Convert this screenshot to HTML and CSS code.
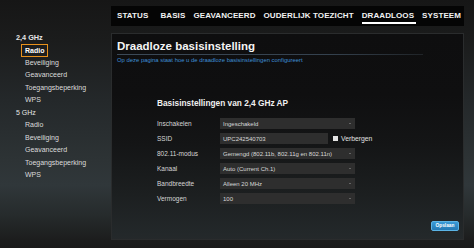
FILE: index.html
```html
<!DOCTYPE html>
<html lang="nl">
<head>
<meta charset="utf-8">
<title>Draadloze basisinstelling</title>
<link rel="stylesheet" href="styles.css">
</head>
<body>
<div class="page">
  <aside class="sidebar">
    <div class="group bold">2,4 GHz</div>
    <div class="item active">Radio</div>
    <div class="item">Beveiliging</div>
    <div class="item">Geavanceerd</div>
    <div class="item">Toegangsbeperking</div>
    <div class="item">WPS</div>
    <div class="group">5 GHz</div>
    <div class="item">Radio</div>
    <div class="item">Beveiliging</div>
    <div class="item">Geavanceerd</div>
    <div class="item">Toegangsbeperking</div>
    <div class="item">WPS</div>
  </aside>
  <div class="main">
    <nav class="nav">
      <span class="tab first">STATUS</span>
      <span class="tab">BASIS</span>
      <span class="tab">GEAVANCEERD</span>
      <span class="tab">OUDERLIJK TOEZICHT</span>
      <span class="tab current">DRAADLOOS</span>
      <span class="tab">SYSTEEM</span>
    </nav>
    <section class="panel">
      <h1 class="title">Draadloze basisinstelling</h1>
      <div class="rule"></div>
      <p class="desc">Op deze pagina staat hoe u de draadloze basisinstellingen configureert</p>
      <div class="content">
        <h2 class="subtitle">Basisinstellingen van 2,4 GHz AP</h2>
        <div class="form">
          <div class="row">
            <span class="label">Inschakelen</span>
            <span class="select"><span>Ingeschakeld</span><i class="arrow"></i></span>
          </div>
          <div class="row">
            <span class="label">SSID</span>
            <span class="input">UPC242540703</span>
            <span class="check"></span>
            <span class="check-label">Verbergen</span>
          </div>
          <div class="row">
            <span class="label">802.11-modus</span>
            <span class="select"><span>Gemengd (802.11b, 802.11g en 802.11n)</span><i class="arrow"></i></span>
          </div>
          <div class="row">
            <span class="label">Kanaal</span>
            <span class="select"><span>Auto (Current Ch.1)</span><i class="arrow"></i></span>
          </div>
          <div class="row">
            <span class="label">Bandbreedte</span>
            <span class="select"><span>Alleen 20 MHz</span><i class="arrow"></i></span>
          </div>
          <div class="row">
            <span class="label">Vermogen</span>
            <span class="select"><span>100</span><i class="arrow"></i></span>
          </div>
        </div>
      </div>
      <div class="actions">
        <button class="btn">Opslaan</button>
      </div>
    </section>
  </div>
</div>
</body>
</html>
```

FILE: styles.css
```css
* { box-sizing: border-box; }

html, body {
  margin: 0;
  padding: 0;
  width: 474px;
  height: 248px;
  overflow: hidden;
}

body {
  font-family: "Liberation Sans", Arial, sans-serif;
  color: #e2e2e2;
  background: linear-gradient(to bottom,
    #161616 0px,
    #1b1c1c 40px,
    #24282a 100px,
    #2d3335 160px,
    #30373a 185px,
    #262b2c 215px,
    #1c1d1d 240px,
    #1a1a1a 248px);
}

.page {
  display: flex;
  height: 248px;
}

/* Sidebar */
.sidebar {
  width: 111px;
  flex: none;
  padding-top: 32px;
  display: flex;
  flex-direction: column;
  align-items: flex-start;
}

.group {
  padding-left: 16px;
  font-size: 7px;
  line-height: 12.5px;
  color: #e6e6e6;
}

.group.bold {
  font-weight: bold;
  font-size: 7.3px;
}

.item {
  padding-left: 25px;
  font-size: 7px;
  line-height: 12.5px;
  color: #dcdcdc;
}

.item.active {
  margin-left: 21px;
  margin-top: -1px;
  padding: 1px 3px;
  line-height: 9px;
  border: 1.5px solid #e8911c;
  font-weight: bold;
  color: #ffffff;
}

/* Main */
.main {
  width: 353px;
  flex: none;
  padding-top: 6px;
  display: flex;
  flex-direction: column;
}

.nav {
  height: 20px;
  background: #050505;
  display: flex;
  align-items: center;
  gap: 8px;
  padding-left: 6px;
}

.tab {
  position: relative;
  font-size: 8px;
  font-weight: bold;
  color: #f2f2f2;
  letter-spacing: 0.1px;
  line-height: 10px;
}

.tab.first { margin-right: 4px; }

.tab.current::after {
  content: "";
  position: absolute;
  left: 0;
  right: -2px;
  bottom: -3px;
  height: 2px;
  background: #ffffff;
}

.panel {
  margin-top: 7px;
  height: 207px;
  border: 1px solid #2a2c2d;
  background: linear-gradient(to bottom,
    #0e0e0f 0px,
    #0f0f10 60px,
    #141516 110px,
    #1c1f20 160px,
    #23282a 200px,
    #25292b 207px);
  padding: 6px 0 0 5px;
  display: flex;
  flex-direction: column;
}

.title {
  margin: 0;
  font-size: 11.5px;
  line-height: 13px;
  font-weight: bold;
  color: #f4f4f4;
}

.rule {
  margin-top: 1px;
  width: 306px;
  height: 1px;
  background: linear-gradient(to right, #3c4a58 0%, #34414e 70%, #202428 100%);
}

.desc {
  margin: 2px 0 0 0;
  font-size: 5.9px;
  line-height: 7px;
  color: #3f8fd6;
}

.content {
  padding-left: 40px;
  margin-top: 34px;
}

.subtitle {
  margin: 0;
  font-size: 8.3px;
  line-height: 10px;
  font-weight: bold;
  color: #f0f0f0;
}

.form {
  margin-top: 10px;
  display: flex;
  flex-direction: column;
  gap: 4px;
}

.row {
  display: flex;
  align-items: center;
  height: 11px;
}

.label {
  width: 63px;
  flex: none;
  font-size: 6.5px;
  color: #d6d6d6;
}

.select, .input {
  height: 11px;
  background: #2e2e2e;
  font-size: 6px;
  color: #d8d8d8;
  display: flex;
  align-items: center;
  padding-left: 3px;
}

.select {
  width: 135px;
  justify-content: space-between;
  padding-right: 4px;
}

.input { width: 108px; }

.arrow {
  width: 0;
  height: 0;
  border-left: 1.2px solid transparent;
  border-right: 1.2px solid transparent;
  border-top: 1.8px solid #9a9a9a;
}

.check {
  width: 5px;
  height: 5px;
  margin-left: 5px;
  background: #e4e4e4;
}

.check-label {
  margin-left: 3px;
  font-size: 6.8px;
  color: #e0e0e0;
}

.actions {
  margin-top: auto;
  display: flex;
  justify-content: flex-end;
  padding: 0 4px 8px 0;
}

.btn {
  width: 28px;
  height: 10px;
  padding: 0;
  border: 1px solid #5bb4e6;
  border-radius: 2px;
  background: linear-gradient(to bottom, #3a9ad6, #2479b4);
  color: #ffffff;
  font-family: "Liberation Sans", Arial, sans-serif;
  font-size: 4.8px;
  font-weight: bold;
  line-height: 8px;
}
```
